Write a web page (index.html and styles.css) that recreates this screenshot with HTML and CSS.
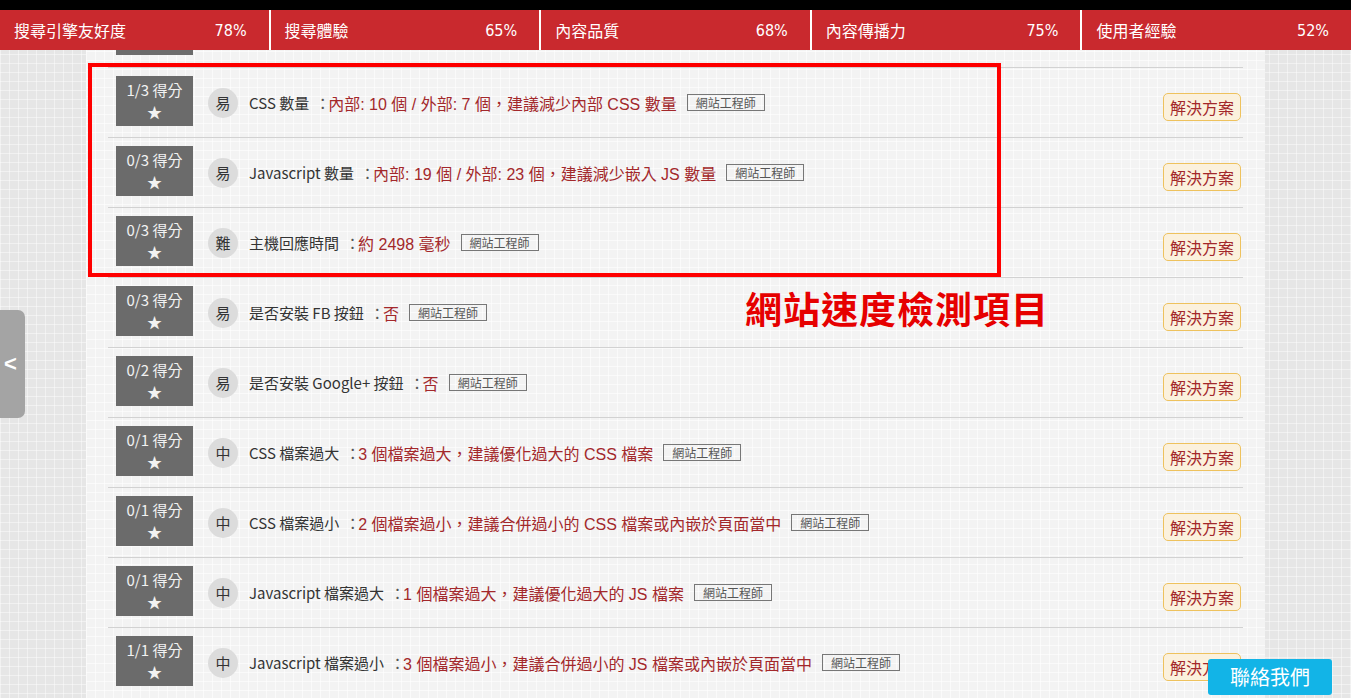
FILE: index.html
```html
<!DOCTYPE html>
<html lang="zh-Hant">
<head>
    <meta charset="UTF-8">
    <meta name="viewport" content="width=device-width, initial-scale=1.0">
    <title>網站健檢報告</title>
    <link rel="stylesheet" href="styles.css">
</head>
<body>
    <header class="score-bar">
        <div class="score-cell"><span>搜尋引擎友好度</span><span class="pct">78%</span></div>
        <div class="score-cell"><span>搜尋體驗</span><span class="pct">65%</span></div>
        <div class="score-cell"><span>內容品質</span><span class="pct">68%</span></div>
        <div class="score-cell"><span>內容傳播力</span><span class="pct">75%</span></div>
        <div class="score-cell"><span>使用者經驗</span><span class="pct">52%</span></div>
    </header>

    <a class="side-tab" href="#">&lt;</a>

    <main class="panel">
        <div class="mark-box"></div>
        <div class="mark-title">網站速度檢測項目</div>

        <div class="check-list" id="check-list">
            <!-- 上一列，已捲到標題列下方 -->
            <div class="check-item first">
                <div class="score-box"></div>
            </div>
        </div>
    </main>

    <a class="contact-btn" href="#">聯絡我們</a>

    <script>
        // 檢測項目資料
        const checks = [
            { score: '1/3', level: '易', name: 'CSS 數量', value: '內部: 10 個 / 外部: 7 個，建議減少內部 CSS 數量' },
            { score: '0/3', level: '易', name: 'Javascript 數量', value: '內部: 19 個 / 外部: 23 個，建議減少嵌入 JS 數量' },
            { score: '0/3', level: '難', name: '主機回應時間', value: '約 2498 毫秒' },
            { score: '0/3', level: '易', name: '是否安裝 FB 按鈕', value: '否' },
            { score: '0/2', level: '易', name: '是否安裝 Google+ 按鈕', value: '否' },
            { score: '0/1', level: '中', name: 'CSS 檔案過大', value: '3 個檔案過大，建議優化過大的 CSS 檔案' },
            { score: '0/1', level: '中', name: 'CSS 檔案過小', value: '2 個檔案過小，建議合併過小的 CSS 檔案或內嵌於頁面當中' },
            { score: '0/1', level: '中', name: 'Javascript 檔案過大', value: '1 個檔案過大，建議優化過大的 JS 檔案' },
            { score: '1/1', level: '中', name: 'Javascript 檔案過小', value: '3 個檔案過小，建議合併過小的 JS 檔案或內嵌於頁面當中' }
        ];

        const list = document.getElementById('check-list');

        checks.forEach(item => {
            const row = document.createElement('div');
            row.className = 'check-item';
            row.innerHTML = `
                <div class="score-box">${item.score} 得分<br>★</div>
                <span class="level">${item.level}</span>
                <span class="check-name">${item.name}</span>
                <span class="colon">：</span>
                <span class="check-value">${item.value}</span>
                <span class="role-tag">網站工程師</span>
                <a href="#" class="solution-btn">解決方案</a>
            `;
            list.appendChild(row);
        });
    </script>
</body>
</html>
```

FILE: styles.css
```css
body {
    margin: 0;
    font-family: "Noto Sans CJK TC", "Noto Sans", sans-serif;
    color: #333;
    background-color: #e6e6e6;
    background-image:
        linear-gradient(rgba(255,255,255,0.45) 1px, transparent 1px),
        linear-gradient(90deg, rgba(255,255,255,0.45) 1px, transparent 1px);
    background-size: 9px 9px;
    overflow: hidden;
}
.score-bar {
    position: fixed;
    top: 0;
    left: 0;
    right: 0;
    z-index: 10;
    display: grid;
    grid-template-columns: repeat(5, 1fr);
    gap: 2px;
    border-top: 10px solid #000;
    background: #fff;
}
.score-cell {
    height: 40px;
    background: #c9292e;
    color: #fff;
    display: flex;
    align-items: center;
    justify-content: space-between;
    padding: 0 22px 0 14px;
    font-size: 16px;
}
.score-cell .pct {
    font-family: "DejaVu Sans", sans-serif;
    font-stretch: condensed;
    font-size: 16px;
}
.panel {
    position: relative;
    max-width: 1179px;
    margin: -3px auto 0;
    min-height: 720px;
    background-color: #f3f3f3;
    background-image:
        linear-gradient(rgba(255,255,255,0.6) 1px, transparent 1px),
        linear-gradient(90deg, rgba(255,255,255,0.6) 1px, transparent 1px);
    background-size: 9px 9px;
}
.check-list {
    padding: 0 22px;
}
.check-item {
    display: flex;
    align-items: center;
    height: 69px;
    padding: 0 2px 0 8px;
    border-top: 1px solid #d2d2d2;
}
.check-item.first {
    border-top: none;
    height: 70px;
}
.score-box {
    align-self: flex-start;
    margin-top: 8px;
    width: 77px;
    height: 50px;
    box-sizing: border-box;
    padding-top: 3px;
    background: #6b6b6b;
    color: #f2f2f2;
    text-align: center;
    font-size: 15px;
    line-height: 22px;
}
.level {
    width: 30px;
    height: 30px;
    border-radius: 50%;
    background: #dcdcdc;
    margin: 0 11px 0 15px;
    display: flex;
    align-items: center;
    justify-content: center;
    font-size: 15px;
    color: #333;
}
.check-name {
    font-size: 15px;
    color: #333;
}
.colon {
    font-size: 15px;
    color: #555;
    margin-left: 6px;
    margin-right: -2px;
}
.check-value {
    font-family: "Liberation Sans", "Noto Sans CJK TC", sans-serif;
    font-size: 16px;
    color: #a3282b;
}
.role-tag {
    margin-left: 10px;
    padding: 0 8px;
    height: 17px;
    line-height: 16px;
    box-sizing: border-box;
    border: 1px solid #777;
    font-size: 12px;
    color: #555;
}
.solution-btn {
    margin-left: auto;
    margin-top: 9px;
    width: 78px;
    height: 28px;
    box-sizing: border-box;
    border: 1px solid #eec25e;
    border-radius: 5px;
    background: #fbf1dd;
    color: #a3282b;
    font-size: 16px;
    line-height: 26px;
    text-align: center;
    text-decoration: none;
}
.mark-box {
    position: absolute;
    top: 66px;
    left: 2px;
    width: 913px;
    height: 214px;
    box-sizing: border-box;
    border: 4px solid #f00;
    pointer-events: none;
}
.mark-title {
    position: absolute;
    top: 284px;
    left: 659px;
    font-size: 37px;
    font-weight: bold;
    color: #e60000;
    letter-spacing: 1px;
}
.side-tab {
    position: fixed;
    left: 0;
    top: 310px;
    width: 25px;
    height: 108px;
    border-radius: 0 7px 7px 0;
    background: #a4a4a4;
    color: #fff;
    font-family: "Liberation Sans", sans-serif;
    font-size: 22px;
    font-weight: bold;
    display: flex;
    align-items: center;
    padding-left: 4px;
    box-sizing: border-box;
    text-decoration: none;
}
.contact-btn {
    position: fixed;
    right: 19px;
    bottom: 3px;
    width: 124px;
    height: 36px;
    border-radius: 3px;
    background: #12b4e7;
    color: #fff;
    font-size: 20px;
    line-height: 36px;
    text-align: center;
    text-decoration: none;
    z-index: 10;
}
```
